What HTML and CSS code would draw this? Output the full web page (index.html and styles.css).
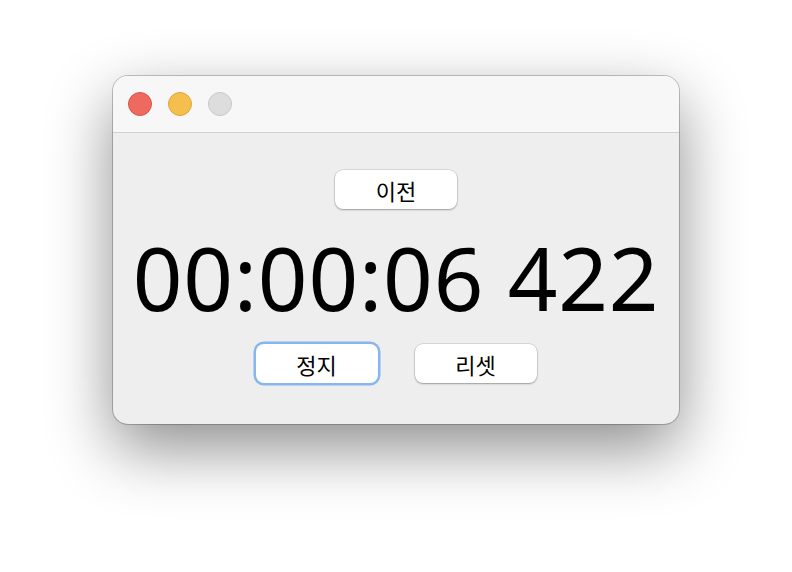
FILE: index.html
```html
<!DOCTYPE html>
<html lang="ko">
<head>
<meta charset="utf-8">
<link rel="stylesheet" href="styles.css">
</head>
<body>
<div class="window">
  <div class="titlebar">
    <span class="light red"></span>
    <span class="light yellow"></span>
    <span class="light gray"></span>
  </div>
  <div class="content">
    <button class="btn">이전</button>
    <div class="timer">00:00:06 422</div>
    <div class="row">
      <button class="btn focused">정지</button>
      <button class="btn">리셋</button>
    </div>
  </div>
</div>
</body>
</html>
```
FILE: styles.css
```css
html, body {
  margin: 0;
  padding: 0;
  background: #ffffff;
}
body {
  width: 792px;
  height: 572px;
  overflow: hidden;
  padding: 76px 0 0 113px;
  box-sizing: border-box;
  font-family: "Noto Sans", "Noto Sans CJK KR", sans-serif;
}
.window {
  width: 566px;
  height: 348px;
  border-radius: 15px;
  background: #eeeeee;
  box-shadow: 0 0 0 1px rgba(0,0,0,0.22), 0 24px 64px rgba(0,0,0,0.45);
  overflow: hidden;
  display: flex;
  flex-direction: column;
}
.titlebar {
  height: 57px;
  background: #f7f7f7;
  border-bottom: 1px solid #d2d2d2;
  display: flex;
  align-items: center;
  gap: 16px;
  padding-left: 15px;
  box-sizing: border-box;
}
.light {
  width: 24px;
  height: 24px;
  border-radius: 50%;
  box-sizing: border-box;
}
.red { background: #ee6a5f; border: 1px solid #d9534a; }
.yellow { background: #f5bf4f; border: 1px solid #dea536; }
.gray { background: #dddddd; border: 1px solid #c8c8c8; }
.content {
  flex: 1;
  display: flex;
  flex-direction: column;
  align-items: center;
  padding-top: 37px;
}
.btn {
  width: 122px;
  height: 39px;
  border: none;
  border-radius: 8px;
  background: #ffffff;
  font-family: "Noto Sans CJK KR", sans-serif;
  font-size: 22px;
  font-weight: 400;
  color: #000000;
  padding: 0;
  box-shadow: 0 0 0 0.5px rgba(0,0,0,0.18), 0 1px 2px rgba(0,0,0,0.28);
}
.btn.focused {
  box-shadow: 0 0 0 2.5px #86b6f0, 0 1px 2px rgba(0,0,0,0.2);
}
.timer {
  font-family: "Noto Sans", sans-serif;
  font-size: 87px;
  line-height: 1;
  letter-spacing: 0.8px;
  color: #000000;
  margin-top: 25px;
  height: 110px;
}
.row {
  display: flex;
  gap: 37px;
}
```
